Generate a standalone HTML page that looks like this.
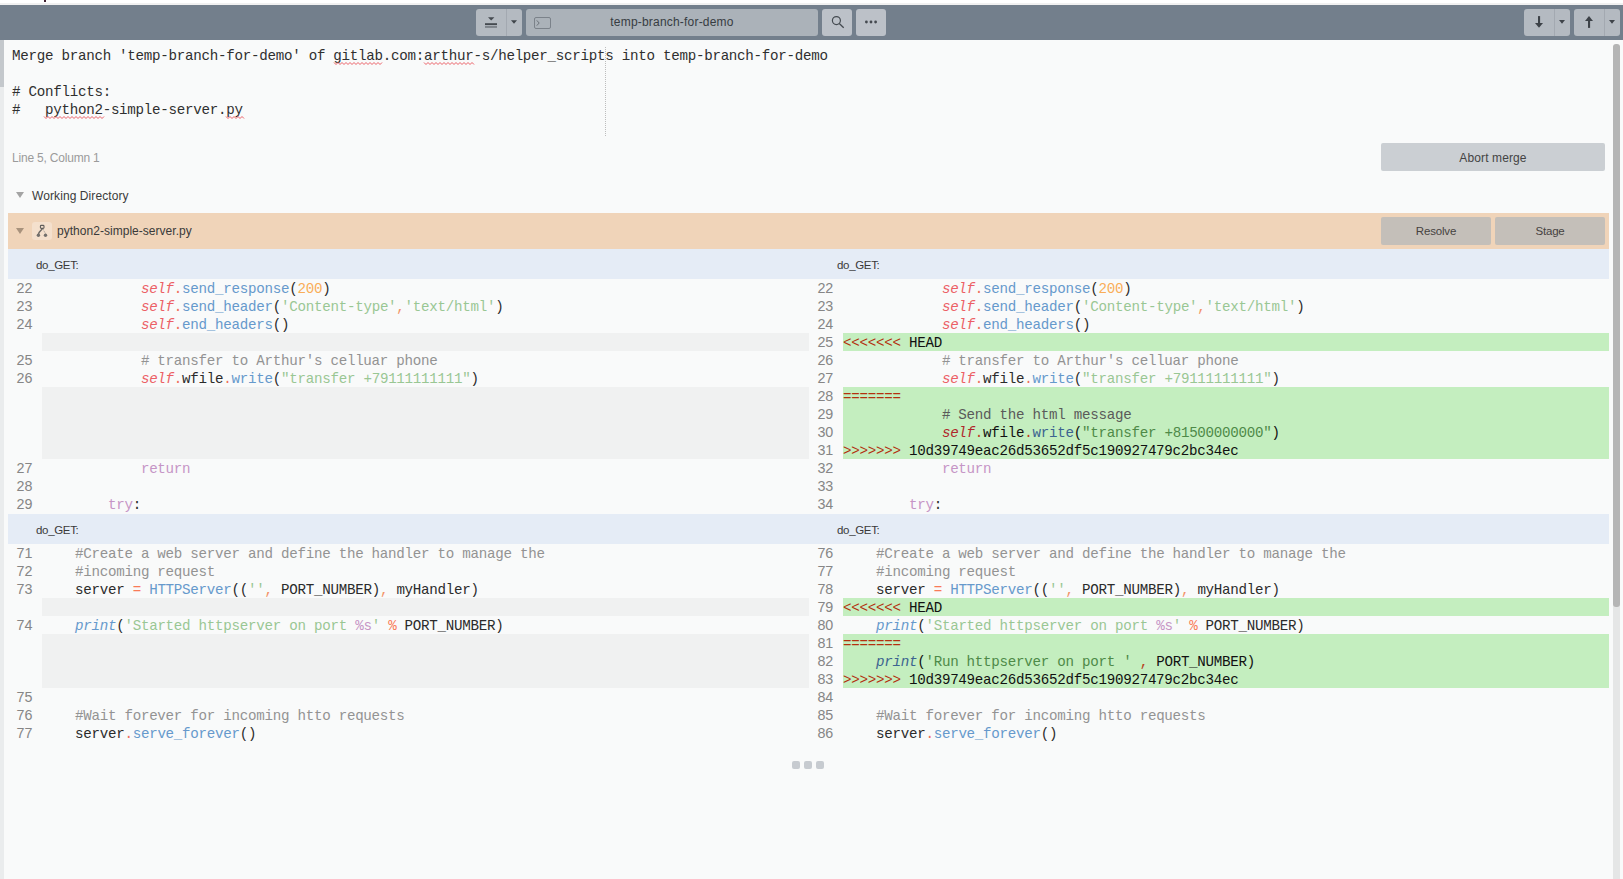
<!DOCTYPE html>
<html lang="en">
<head>
<meta charset="utf-8">
<title>temp-branch-for-demo</title>
<style>
*{box-sizing:border-box;margin:0;padding:0}
html,body{width:1623px;height:879px;overflow:hidden;background:#f9fafa}
body{position:relative;font-family:"Liberation Sans",sans-serif;font-size:12px;color:#333}
.abs{position:absolute}
/* top strip */
#topw{left:0;top:0;width:1623px;height:3px;background:#fff}
#topg{left:0;top:3px;width:1623px;height:2px;background:#f1f1f1}
#mark{left:44px;top:0;width:2px;height:2px;background:#402030}
/* toolbar */
#bar{left:0;top:5px;width:1623px;height:35px;background:#737f8c}
.tb{position:absolute;top:4px;height:27px;border-radius:3px;background:#b4bac1}
.tb .sep{position:absolute;top:0;width:1px;height:27px;background:#a3a9b1}
.tb svg{position:absolute;left:0;top:0}
#branch{background:#abb2b9}
#branch span{position:absolute;left:0;right:0;top:0;line-height:26px;text-align:center;font-size:12px;color:#373c42;letter-spacing:.2px}
#bsearch,#bmore{background:#bcc1c8}
/* left strip */
#ls1{left:0;top:40px;width:4px;height:47px;background:#c4c8cc}
#ls2{left:0;top:87px;width:4px;height:792px;background:#eaeced}
/* scrollbar */
#sbt{left:1613px;top:46px;width:7px;height:833px;background:#e5e6e6}
#sbh{left:1613px;top:44px;width:7px;height:563px;background:#b5b5b5;border-radius:3px}
/* commit message */
.mono{font-family:"Liberation Mono",monospace;font-size:14.2px;letter-spacing:-.274px;white-space:pre}
#msg{left:12px;top:47px;line-height:18px;color:#2f2f2f}
.zz{position:absolute;height:4px;overflow:visible}
.zz polyline{fill:none;stroke:#ec5f66;stroke-width:1}
#ruler{left:605px;top:47px;width:1px;height:89px;background:repeating-linear-gradient(to bottom,#bdbdbd 0 1px,transparent 1px 2px)}
#pos{left:12px;top:151px;line-height:15px;font-size:12px;color:#9b9b9b;letter-spacing:-.2px}
.btn{position:absolute;border-radius:2px;text-align:center;color:#444;font-size:12px;letter-spacing:.12px}
#abort{left:1381px;top:143px;width:224px;height:28px;line-height:30px;background:#cbcfd3}
#wd{left:32px;top:189px;line-height:15px;font-size:12px;color:#3b3b3b;letter-spacing:.09px}
.tri{position:absolute;width:0;height:0;border-left:4px solid transparent;border-right:4px solid transparent;border-top:6px solid #a4a4a4}
/* file row */
#file{left:8px;top:213px;width:1601px;height:36px;background:#f0d4b9}
#ficon{left:24px;top:9px;width:20px;height:18px;border-radius:3px;background:#f4e0cd}
#fname{left:49px;top:11px;line-height:15px;font-size:12px;color:#3a3a3a;letter-spacing:.03px}
#file .btn{top:4px;height:28px;line-height:28px;background:#c4bfb9;color:#46423f;font-size:11.5px;letter-spacing:-.18px}
/* hunks */
.hh{position:absolute;left:8px;width:1601px;height:30px;background:#e5ecf6;font-size:11.5px;letter-spacing:-.33px;line-height:32px;color:#3a3a3a}
.hh span{position:absolute;top:0}
/* code rows */
.row{position:absolute;left:8px;width:1601px;height:18px}
.ln{position:absolute;top:0;height:18px;width:26px;text-align:right;font-style:normal;font-size:14.3px;line-height:18px;color:#868686}
.ln.l{left:-1.5px}
.ln.r{left:799.3px}
.cd{position:absolute;top:0;height:18px;line-height:20px;font-family:"Liberation Mono",monospace;font-size:14.2px;letter-spacing:-.274px;white-space:pre;color:#2b2b2b;overflow:hidden}
.cd.l{left:34px;width:767px}
.cd.r{left:835px;width:766px}
.fill{background:#f0f1f1}
.add{background:#c4eebf;color:#111}
.s{color:#ec5f66;font-style:italic}
.p{color:#f0705a}
.q{color:#f3946a}
.add .q{color:#b8401c}
.f{color:#6699cc}
.b{color:#6699cc;font-style:italic}
.n{color:#f9ae58}
.g{color:#99c794}
.c{color:#939393}
.k{color:#c695c6}
.o{color:#f97b58}
.m{color:#b3300f}
.add .s{color:#b0262b}
.add .p{color:#c03a20}
.add .f,.add .b{color:#3c6390}
.add .g{color:#4e8a48}
.add .c{color:#5a5a5a}
</style>
</head>
<body>
<div class="abs" id="topw"></div><div class="abs" id="topg"></div><div class="abs" id="mark"></div>

<div class="abs" id="bar">
  <div class="tb" style="left:476px;width:46px">
    <div class="sep" style="left:30px"></div>
    <svg width="46" height="27" viewBox="0 0 46 27"><path d="M12 8.2h6.4l-3.2 3.4z" fill="#454a50"/><rect x="9" y="14.2" width="12" height="1.9" fill="#454a50"/><rect x="9" y="17" width="12" height="1.9" fill="#7d838a"/><path d="M35 11.2h6l-3 3.6z" fill="#3f444a"/></svg>
  </div>
  <div class="tb" id="branch" style="left:526px;width:292px">
    <svg width="30" height="27" viewBox="0 0 30 27"><rect x="8.5" y="8.5" width="16" height="11" rx="1.5" fill="none" stroke="#7b828a" stroke-width="1"/><path d="M10.8 11.4l2.4 2.6-2.4 2.6" fill="none" stroke="#6b7279" stroke-width="1"/></svg>
    <span>temp-branch-for-demo</span>
  </div>
  <div class="tb" id="bsearch" style="left:822px;width:30px">
    <svg width="30" height="27" viewBox="0 0 30 27"><circle cx="14.4" cy="11.6" r="4" fill="none" stroke="#444a50" stroke-width="1.2"/><path d="M17.3 14.6l4.4 4.1" stroke="#444a50" stroke-width="1.3" fill="none"/></svg>
  </div>
  <div class="tb" id="bmore" style="left:856px;width:30px">
    <svg width="30" height="27" viewBox="0 0 30 27"><circle cx="10.4" cy="13" r="1.4" fill="#454a50"/><circle cx="15" cy="13" r="1.4" fill="#454a50"/><circle cx="19.6" cy="13" r="1.4" fill="#454a50"/></svg>
  </div>
  <div class="tb" style="left:1524px;width:46px">
    <div class="sep" style="left:30px"></div>
    <svg width="46" height="27" viewBox="0 0 46 27"><rect x="14" y="7.1" width="2.1" height="8.5" fill="#3d4248"/><path d="M11 14.1h8l-4 4.7z" fill="#3d4248"/><path d="M35 11h6l-3 3.8z" fill="#3f444a"/></svg>
  </div>
  <div class="tb" style="left:1574px;width:46px">
    <div class="sep" style="left:30px"></div>
    <svg width="46" height="27" viewBox="0 0 46 27"><rect x="14" y="10.4" width="2.1" height="8.5" fill="#3d4248"/><path d="M11 11.9h8l-4-4.8z" fill="#3d4248"/><path d="M35 11h6l-3 3.8z" fill="#3f444a"/></svg>
  </div>
</div>

<div class="abs" id="ls1"></div><div class="abs" id="ls2"></div>
<div class="abs" id="sbt"></div><div class="abs" id="sbh"></div>

<div class="abs mono" id="msg">Merge branch 'temp-branch-for-demo' of gitlab.com:arthur-s/helper_scripts into temp-branch-for-demo

# Conflicts:
#   python2-simple-server.py</div>
<svg class="zz" style="left:334px;top:62px" width="49" height="4"><polyline points="0,0.5 2,2.5 4,0.5 6,2.5 8,0.5 10,2.5 12,0.5 14,2.5 16,0.5 18,2.5 20,0.5 22,2.5 24,0.5 26,2.5 28,0.5 30,2.5 32,0.5 34,2.5 36,0.5 38,2.5 40,0.5 42,2.5 44,0.5 46,2.5 48,0.5"/></svg>
<svg class="zz" style="left:424px;top:62px" width="50" height="4"><polyline points="0,0.5 2,2.5 4,0.5 6,2.5 8,0.5 10,2.5 12,0.5 14,2.5 16,0.5 18,2.5 20,0.5 22,2.5 24,0.5 26,2.5 28,0.5 30,2.5 32,0.5 34,2.5 36,0.5 38,2.5 40,0.5 42,2.5 44,0.5 46,2.5 48,0.5 50,2.5"/></svg>
<svg class="zz" style="left:44px;top:116px" width="60" height="4"><polyline points="0,0.5 2,2.5 4,0.5 6,2.5 8,0.5 10,2.5 12,0.5 14,2.5 16,0.5 18,2.5 20,0.5 22,2.5 24,0.5 26,2.5 28,0.5 30,2.5 32,0.5 34,2.5 36,0.5 38,2.5 40,0.5 42,2.5 44,0.5 46,2.5 48,0.5 50,2.5 52,0.5 54,2.5 56,0.5 58,2.5 60,0.5"/></svg>
<svg class="zz" style="left:226px;top:116px" width="18" height="4"><polyline points="0,0.5 2,2.5 4,0.5 6,2.5 8,0.5 10,2.5 12,0.5 14,2.5 16,0.5 18,2.5"/></svg>
<div class="abs" id="ruler"></div>
<div class="abs" id="pos">Line 5, Column 1</div>
<div class="btn" id="abort">Abort merge</div>

<div class="tri" style="left:16px;top:192px"></div>
<div class="abs" id="wd">Working Directory</div>

<div class="abs" id="file">
  <div class="tri" style="left:8px;top:15px;border-top-color:#a8927c"></div>
  <div class="abs" id="ficon"><svg width="20" height="18" viewBox="0 0 20 18"><path d="M10.3 6.6C9.4 8.6 7 9.6 6.5 12" stroke="#6b6865" stroke-width="1.4" fill="none"/><path d="M10.8 7l2.6 4.4" stroke="#9a938c" stroke-width="0.9" stroke-dasharray="1.2 0.8" fill="none"/><rect x="8.4" y="3.4" width="3.6" height="3" rx="0.9" fill="#f4e0cd" stroke="#605d5a" stroke-width="1.1"/><circle cx="6.4" cy="13.2" r="1.7" fill="#726f6c"/><circle cx="13.5" cy="13.2" r="1.7" fill="#726f6c"/></svg></div>
  <div class="abs" id="fname">python2-simple-server.py</div>
  <div class="btn" style="left:1373px;width:110px">Resolve</div>
  <div class="btn" style="left:1487px;width:110px">Stage</div>
</div>

<div class="hh" style="top:249px"><span style="left:28px">do_GET:</span><span style="left:829px">do_GET:</span></div>
<div class="hh" style="top:514px"><span style="left:28px">do_GET:</span><span style="left:829px">do_GET:</span></div>

<!--CODE-->
<div class="row" style="top:279px"><i class="ln l">22</i><code class="cd l">            <span class="s">self</span><span class="p">.</span><span class="f">send_response</span>(<span class="n">200</span>)</code><i class="ln r">22</i><code class="cd r">            <span class="s">self</span><span class="p">.</span><span class="f">send_response</span>(<span class="n">200</span>)</code></div>
<div class="row" style="top:297px"><i class="ln l">23</i><code class="cd l">            <span class="s">self</span><span class="p">.</span><span class="f">send_header</span>(<span class="g">'Content-type'</span><span class="q">,</span><span class="g">'text/html'</span>)</code><i class="ln r">23</i><code class="cd r">            <span class="s">self</span><span class="p">.</span><span class="f">send_header</span>(<span class="g">'Content-type'</span><span class="q">,</span><span class="g">'text/html'</span>)</code></div>
<div class="row" style="top:315px"><i class="ln l">24</i><code class="cd l">            <span class="s">self</span><span class="p">.</span><span class="f">end_headers</span>()</code><i class="ln r">24</i><code class="cd r">            <span class="s">self</span><span class="p">.</span><span class="f">end_headers</span>()</code></div>
<div class="row" style="top:333px"><i class="ln l"></i><code class="cd l fill"></code><i class="ln r">25</i><code class="cd r add"><span class="m">&lt;&lt;&lt;&lt;&lt;&lt;&lt;</span> HEAD</code></div>
<div class="row" style="top:351px"><i class="ln l">25</i><code class="cd l">            <span class="c"># transfer to Arthur's celluar phone</span></code><i class="ln r">26</i><code class="cd r">            <span class="c"># transfer to Arthur's celluar phone</span></code></div>
<div class="row" style="top:369px"><i class="ln l">26</i><code class="cd l">            <span class="s">self</span><span class="p">.</span>wfile<span class="p">.</span><span class="f">write</span>(<span class="g">"transfer +79111111111"</span>)</code><i class="ln r">27</i><code class="cd r">            <span class="s">self</span><span class="p">.</span>wfile<span class="p">.</span><span class="f">write</span>(<span class="g">"transfer +79111111111"</span>)</code></div>
<div class="row" style="top:387px"><i class="ln l"></i><code class="cd l fill"></code><i class="ln r">28</i><code class="cd r add"><span class="m">=======</span></code></div>
<div class="row" style="top:405px"><i class="ln l"></i><code class="cd l fill"></code><i class="ln r">29</i><code class="cd r add">            <span class="c"># Send the html message</span></code></div>
<div class="row" style="top:423px"><i class="ln l"></i><code class="cd l fill"></code><i class="ln r">30</i><code class="cd r add">            <span class="s">self</span><span class="p">.</span>wfile<span class="p">.</span><span class="f">write</span>(<span class="g">"transfer +81500000000"</span>)</code></div>
<div class="row" style="top:441px"><i class="ln l"></i><code class="cd l fill"></code><i class="ln r">31</i><code class="cd r add"><span class="m">&gt;&gt;&gt;&gt;&gt;&gt;&gt;</span> 10d39749eac26d53652df5c190927479c2bc34ec</code></div>
<div class="row" style="top:459px"><i class="ln l">27</i><code class="cd l">            <span class="k">return</span></code><i class="ln r">32</i><code class="cd r">            <span class="k">return</span></code></div>
<div class="row" style="top:477px"><i class="ln l">28</i><code class="cd l"></code><i class="ln r">33</i><code class="cd r"></code></div>
<div class="row" style="top:495px"><i class="ln l">29</i><code class="cd l">        <span class="k">try</span>:</code><i class="ln r">34</i><code class="cd r">        <span class="k">try</span>:</code></div>
<div class="row" style="top:544px"><i class="ln l">71</i><code class="cd l">    <span class="c">#Create a web server and define the handler to manage the</span></code><i class="ln r">76</i><code class="cd r">    <span class="c">#Create a web server and define the handler to manage the</span></code></div>
<div class="row" style="top:562px"><i class="ln l">72</i><code class="cd l">    <span class="c">#incoming request</span></code><i class="ln r">77</i><code class="cd r">    <span class="c">#incoming request</span></code></div>
<div class="row" style="top:580px"><i class="ln l">73</i><code class="cd l">    server <span class="o">=</span> <span class="f">HTTPServer</span>((<span class="g">''</span><span class="q">,</span> PORT_NUMBER)<span class="q">,</span> myHandler)</code><i class="ln r">78</i><code class="cd r">    server <span class="o">=</span> <span class="f">HTTPServer</span>((<span class="g">''</span><span class="q">,</span> PORT_NUMBER)<span class="q">,</span> myHandler)</code></div>
<div class="row" style="top:598px"><i class="ln l"></i><code class="cd l fill"></code><i class="ln r">79</i><code class="cd r add"><span class="m">&lt;&lt;&lt;&lt;&lt;&lt;&lt;</span> HEAD</code></div>
<div class="row" style="top:616px"><i class="ln l">74</i><code class="cd l">    <span class="b">print</span>(<span class="g">'Started httpserver on port </span><span class="k">%s</span><span class="g">'</span> <span class="o">%</span> PORT_NUMBER)</code><i class="ln r">80</i><code class="cd r">    <span class="b">print</span>(<span class="g">'Started httpserver on port </span><span class="k">%s</span><span class="g">'</span> <span class="o">%</span> PORT_NUMBER)</code></div>
<div class="row" style="top:634px"><i class="ln l"></i><code class="cd l fill"></code><i class="ln r">81</i><code class="cd r add"><span class="m">=======</span></code></div>
<div class="row" style="top:652px"><i class="ln l"></i><code class="cd l fill"></code><i class="ln r">82</i><code class="cd r add">    <span class="b">print</span>(<span class="g">'Run httpserver on port '</span> <span class="q">,</span> PORT_NUMBER)</code></div>
<div class="row" style="top:670px"><i class="ln l"></i><code class="cd l fill"></code><i class="ln r">83</i><code class="cd r add"><span class="m">&gt;&gt;&gt;&gt;&gt;&gt;&gt;</span> 10d39749eac26d53652df5c190927479c2bc34ec</code></div>
<div class="row" style="top:688px"><i class="ln l">75</i><code class="cd l"></code><i class="ln r">84</i><code class="cd r"></code></div>
<div class="row" style="top:706px"><i class="ln l">76</i><code class="cd l">    <span class="c">#Wait forever for incoming htto requests</span></code><i class="ln r">85</i><code class="cd r">    <span class="c">#Wait forever for incoming htto requests</span></code></div>
<div class="row" style="top:724px"><i class="ln l">77</i><code class="cd l">    server<span class="p">.</span><span class="f">serve_forever</span>()</code><i class="ln r">86</i><code class="cd r">    server<span class="p">.</span><span class="f">serve_forever</span>()</code></div>
<!--/CODE-->

<div class="abs" style="left:792px;top:761px;width:8px;height:8px;border-radius:2px;background:#c7cbd0"></div>
<div class="abs" style="left:804px;top:761px;width:8px;height:8px;border-radius:2px;background:#c7cbd0"></div>
<div class="abs" style="left:816px;top:761px;width:8px;height:8px;border-radius:2px;background:#c7cbd0"></div>
</body>
</html>
